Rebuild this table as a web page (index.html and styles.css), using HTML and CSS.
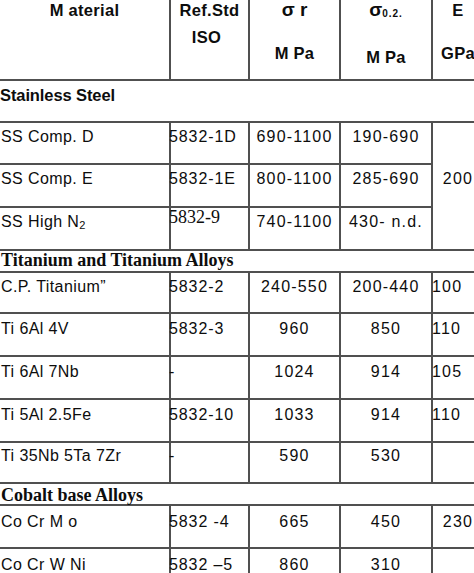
FILE: index.html
```html
<!DOCTYPE html>
<html lang="en">
<head>
<meta charset="utf-8">
<title>Material properties</title>
<link rel="stylesheet" href="styles.css">
</head>
<body>
<div class="table">
  <div class="c head"><div class="l1">M aterial</div></div>
  <div class="c head"><div class="l1">Ref.Std</div><div class="l2 iso">ISO</div></div>
  <div class="c head"><div class="l1 sig">σ r</div><div class="l2">M Pa</div></div>
  <div class="c head"><div class="l1 sig">σ<span class="sub">0.2.</span></div><div class="l2">M Pa</div></div>
  <div class="c head"><div class="l1">E</div><div class="l2">GPa</div></div>

  <div class="c sec sans">Stainless Steel</div>

  <div class="c mat">SS Comp. D</div>
  <div class="c ref">5832-1D</div>
  <div class="c num">690-1100</div>
  <div class="c num">190-690</div>
  <div class="c num span3">200</div>

  <div class="c mat">SS Comp. E</div>
  <div class="c ref">5832-1E</div>
  <div class="c num">800-1100</div>
  <div class="c num">285-690</div>

  <div class="c mat">SS High N<span class="nsub">2</span></div>
  <div class="c ref serif">5832-9</div>
  <div class="c num">740-1100</div>
  <div class="c num">430- n.d.</div>

  <div class="c sec serifb">Titanium and Titanium Alloys</div>

  <div class="c mat">C.P. Titanium”</div>
  <div class="c ref">5832-2</div>
  <div class="c num">240-550</div>
  <div class="c num">200-440</div>
  <div class="c num left">100</div>

  <div class="c mat pt6">Ti 6Al 4V</div>
  <div class="c ref pt6">5832-3</div>
  <div class="c num pt6">960</div>
  <div class="c num pt6">850</div>
  <div class="c num left pt6">110</div>

  <div class="c mat pt6">Ti 6Al 7Nb</div>
  <div class="c ref pt6">-</div>
  <div class="c num pt6">1024</div>
  <div class="c num pt6">914</div>
  <div class="c num left pt6">105</div>

  <div class="c mat pt6">Ti 5Al 2.5Fe</div>
  <div class="c ref pt6">5832-10</div>
  <div class="c num pt6">1033</div>
  <div class="c num pt6">914</div>
  <div class="c num left pt6">110</div>

  <div class="c mat pt4">Ti 35Nb 5Ta 7Zr</div>
  <div class="c ref pt4">-</div>
  <div class="c num pt4">590</div>
  <div class="c num pt4">530</div>
  <div class="c num pt4"></div>

  <div class="c sec serifb co">Cobalt base Alloys</div>

  <div class="c mat pt7">Co Cr M o</div>
  <div class="c ref pt7">5832 -4</div>
  <div class="c num pt7">665</div>
  <div class="c num pt7">450</div>
  <div class="c num pt7">230</div>

  <div class="c mat pt7">Co Cr W Ni</div>
  <div class="c ref pt7">5832 –5</div>
  <div class="c num pt7">860</div>
  <div class="c num pt7">310</div>
  <div class="c num pt7"></div>
</div>
</body>
</html>
```

FILE: styles.css
```css
html, body {
  margin: 0;
  padding: 0;
  background: #ffffff;
}
body {
  width: 474px;
  height: 573px;
  overflow: hidden;
  color: #0d0d0d;
  font-family: "Liberation Sans", Arial, sans-serif;
}
.table {
  display: grid;
  grid-template-columns: 171px 79px 91px 92px 52px;
  grid-template-rows: 81px 42px 42px 43px 43px 22px 41px 43px 43px 43px 41px 22px 43px 43px;
  width: 484px;
}
.c {
  box-sizing: border-box;
  border-right: 2px solid #505050;
  border-bottom: 2px solid #505050;
  font-size: 16px;
  line-height: 18px;
  padding-top: 5px;
  white-space: nowrap;
  overflow: visible;
}
.head {
  text-align: center;
  font-weight: bold;
  font-size: 16.5px;
  letter-spacing: 0.3px;
  padding-top: 1px;
}
.head .l2 {
  margin-top: 25px;
}
.head .l2.iso {
  margin-top: 9px;
  padding-right: 6px;
}
.head .sig {
  font-size: 19px;
  letter-spacing: 0;
}
.head .sub {
  font-size: 10px;
  letter-spacing: 1px;
  vertical-align: -1px;
}
.sec {
  grid-column: 1 / -1;
  border-right: none;
  padding-left: 0;
}
.sans {
  font-weight: bold;
  font-size: 16.5px;
  letter-spacing: -0.1px;
  padding-top: 5px;
}
.serifb {
  font-family: "Liberation Serif", "Times New Roman", serif;
  font-weight: bold;
  font-size: 18px;
  padding-top: 0;
  padding-left: 1px;
}
.serifb.co {
  padding-top: 2px;
}
.mat {
  padding-left: 1px;
  letter-spacing: 0.4px;
}
.nsub {
  font-size: 11px;
  vertical-align: -2px;
  letter-spacing: 0;
}
.ref {
  text-indent: -2px;
  letter-spacing: 0.9px;
}
.ref.serif {
  font-family: "Liberation Serif", "Times New Roman", serif;
  font-size: 18px;
  line-height: 16px;
  padding-top: 1px;
  letter-spacing: 0;
}
.num {
  text-align: center;
  letter-spacing: 1.2px;
}
.num.left {
  text-align: left;
  text-indent: -1px;
}
.span3 {
  grid-row: span 3;
  padding-top: 47px;
}
.pt4 { padding-top: 4px; }
.pt6 { padding-top: 6px; }
.pt7 { padding-top: 7px; }
```
